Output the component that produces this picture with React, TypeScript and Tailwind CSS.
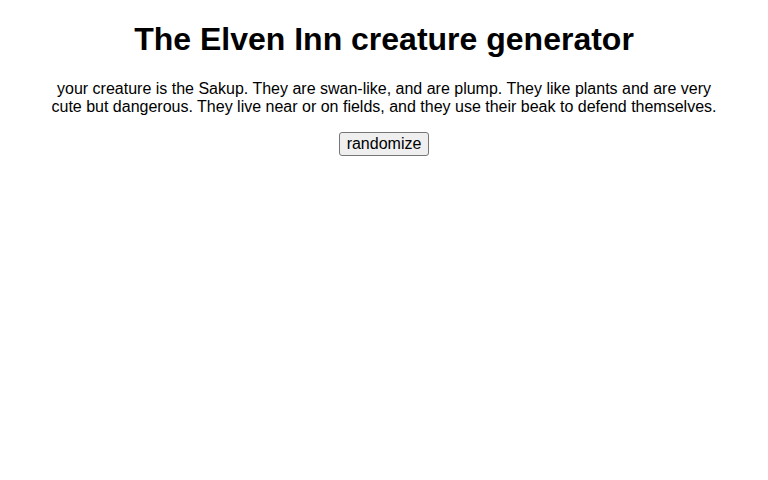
export default function App() {
  return (
    <div className="mx-2 text-center text-black" style={{ fontFamily: '"Liberation Sans", Arial, sans-serif' }}>
      <h1 className="pt-[21px] text-[32px] font-bold leading-[37px]">The Elven Inn creature generator</h1>
      <p className="mx-[40px] mt-[22px] text-[16px] leading-[18px]">
        your creature is the Sakup. They are swan-like, and are plump. They like plants and are very cute but dangerous. They live near or on fields, and they use their beak to defend themselves.
      </p>
      <button className="mt-[16px] rounded-[3px] border border-[#767676] bg-[#efefef] px-[7px] py-[2px] text-[16px] leading-[18px]">
        randomize
      </button>
    </div>
  );
}
